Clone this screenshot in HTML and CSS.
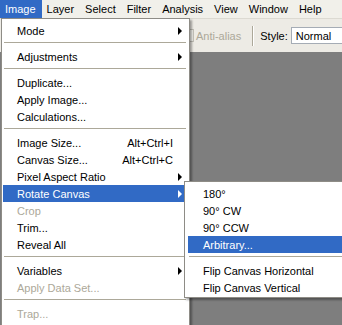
FILE: index.html
```html
<!DOCTYPE html>
<html lang="en">
<head>
    <meta charset="UTF-8">
    <title>Image Menu</title>
    <link rel="stylesheet" href="styles.css">
</head>
<body>

    <div class="screen">
        <div class="menubar">
            <span class="menu-title active">Image</span>
            <span class="menu-title">Layer</span>
            <span class="menu-title">Select</span>
            <span class="menu-title">Filter</span>
            <span class="menu-title">Analysis</span>
            <span class="menu-title">View</span>
            <span class="menu-title">Window</span>
            <span class="menu-title">Help</span>
        </div>

        <div class="toolbar">
            <span class="check"></span>
            <span class="disabled">Anti-alias</span>
            <span class="tool-sep"></span>
            <span class="tool-label">Style:</span>
            <span class="select-box">Normal</span>
        </div>

        <div class="canvas"></div>

        <!-- Image dropdown -->
        <div class="menu main-menu">
            <div class="item has-sub">Mode</div>
            <div class="sep"></div>
            <div class="item has-sub">Adjustments</div>
            <div class="sep"></div>
            <div class="item">Duplicate...</div>
            <div class="item">Apply Image...</div>
            <div class="item">Calculations...</div>
            <div class="sep"></div>
            <div class="item">Image Size... <span class="key">Alt+Ctrl+I</span></div>
            <div class="item">Canvas Size... <span class="key">Alt+Ctrl+C</span></div>
            <div class="item has-sub">Pixel Aspect Ratio</div>
            <div class="item has-sub selected">Rotate Canvas</div>
            <div class="item disabled">Crop</div>
            <div class="item">Trim...</div>
            <div class="item">Reveal All</div>
            <div class="sep"></div>
            <div class="item has-sub">Variables</div>
            <div class="item disabled">Apply Data Set...</div>
            <div class="sep"></div>
            <div class="item disabled">Trap...</div>
        </div>

        <!-- Rotate Canvas submenu -->
        <div class="menu sub-menu">
            <div class="item">180°</div>
            <div class="item">90° CW</div>
            <div class="item">90° CCW</div>
            <div class="item selected">Arbitrary...</div>
            <div class="sep"></div>
            <div class="item">Flip Canvas Horizontal</div>
            <div class="item">Flip Canvas Vertical</div>
        </div>
    </div>

</body>
</html>
```

FILE: styles.css
```css
body {
    margin: 0;
    padding: 0;
    font-family: 'Liberation Sans', Arial, sans-serif;
    font-size: 11px;
    color: #000;
    background: #7e7e7e;
    overflow: hidden;
}

.screen {
    position: relative;
    width: 342px;
    height: 325px;
    display: flex;
    flex-direction: column;
}

.menubar {
    display: flex;
    height: 18px;
    line-height: 18px;
    background: #f1f0ea;
    border-bottom: 1px solid #dcdad2;
}

.menu-title {
    padding: 0 6px 0 5px;
}

.menu-title.active {
    background: #316ac5;
    color: #fff;
}

.toolbar {
    display: flex;
    align-items: center;
    height: 33px;
    padding-left: 181px;
    background: #edebe5;
}

.check {
    width: 11px;
    height: 11px;
    border: 1px solid #c2c0b8;
    background: #f4f3ef;
    margin-right: 2px;
}

.disabled {
    color: #aca899;
}

.tool-sep {
    width: 1px;
    height: 20px;
    margin: 0 6px 0 11px;
    background: #aca899;
    border-right: 1px solid #fff;
}

.select-box {
    height: 17px;
    line-height: 17px;
    margin-left: 3px;
    padding-left: 4px;
    flex: 1;
    background: #fff;
    border: 1px solid #a5acb5;
    border-right: none;
    box-sizing: border-box;
}

.canvas {
    flex: 1;
    background: #7e7e7e;
}

.menu {
    position: absolute;
    box-sizing: border-box;
    background: #fff;
    border: 1px solid #8e8c86;
    box-shadow: 2px 2px 2px rgba(0, 0, 0, 0.35);
}

.main-menu {
    left: 1px;
    top: 18px;
    width: 189px;
    height: 320px;
    padding: 3px 2px 0 1px;
}

.sub-menu {
    left: 184px;
    top: 181px;
    width: 160px;
    padding: 3px 0 1px 3px;
}

.item {
    display: flex;
    align-items: center;
    height: 17px;
    padding: 0 5px 0 14px;
    white-space: nowrap;
}

.sub-menu .item {
    padding-left: 15px;
}

.item.selected {
    background: #316ac5;
    color: #fff;
}

.key {
    margin-left: auto;
    margin-right: 9px;
}

.has-sub::after {
    content: "";
    margin-left: auto;
    border-style: solid;
    border-width: 4px 0 4px 4px;
    border-color: transparent transparent transparent #000;
}

.has-sub.selected::after {
    border-left-color: #fff;
}

.sep {
    height: 1px;
    margin: 3px 1px 5px;
    background: #aca899;
}
```
